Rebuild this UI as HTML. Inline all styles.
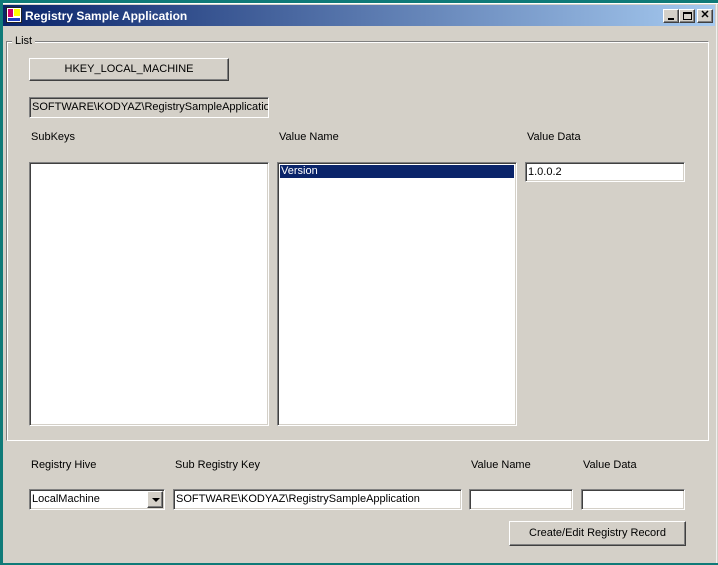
<!DOCTYPE html>
<html><head><style>
*{margin:0;padding:0;box-sizing:border-box}
body{width:718px;height:565px;background:#d4d0c8;position:relative;overflow:hidden;font:11px "Liberation Sans",sans-serif;color:#000}
.a{position:absolute}
.sunk{position:absolute;background:#fff;border:1px solid;border-color:#808080 #fff #fff #808080;box-shadow:inset 1px 1px 0 #404040,inset -1px -1px 0 #d4d0c8}
.btn{position:absolute;background:#d4d0c8;border:1px solid;border-color:#fff #404040 #404040 #fff;box-shadow:inset -1px -1px 0 #808080;text-align:center}
.t{position:absolute;white-space:nowrap}
</style></head><body>
<div class="a" style="left:0;top:0;width:718px;height:3px;background:#0f7a78"></div>
<div class="a" style="left:0;top:0;width:3px;height:565px;background:#0f7a78"></div>
<div class="a" style="left:0;top:563px;width:718px;height:2px;background:#0f7a78"></div>
<div class="a" style="left:716px;top:3px;width:1px;height:560px;background:#f0f0f0"></div>
<div class="a" style="left:3px;top:3px;width:715px;height:1px;background:#fff"></div>
<div class="a" style="left:3px;top:5px;width:712px;height:21px;background:linear-gradient(90deg,#0a246a,#a6caf0)"></div>
<div class="a" style="left:6px;top:7px;width:16px;height:16px;background:#fff;border:1px solid #222">
 <div class="a" style="left:1px;top:1px;width:5px;height:8px;background:#d0006a"></div>
 <div class="a" style="left:7px;top:1px;width:6px;height:7px;background:#ff0"></div>
 <div class="a" style="left:1px;top:10px;width:12px;height:3px;background:#2040c0"></div>
</div>
<div class="t" style="left:25px;top:9px;color:#fff;font-weight:bold;font-size:12px">Registry Sample Application</div>
<div class="btn" style="left:663px;top:9px;width:16px;height:14px"><div class="a" style="left:4px;top:8px;width:6px;height:2px;background:#000"></div></div>
<div class="btn" style="left:679px;top:9px;width:16px;height:14px"><div class="a" style="left:3px;top:2px;width:9px;height:8px;border:1px solid #000;border-top-width:2px"></div></div>
<div class="btn" style="left:697px;top:9px;width:16px;height:14px;font-weight:bold;font-size:11px;line-height:11px">✕</div>
<div class="a" style="left:6px;top:41px;width:703px;height:400px;border:1px solid;border-color:#808080 #fff #fff #808080;box-shadow:inset 1px 1px 0 #fff,1px 1px 0 #808080 inset"></div>
<div class="t" style="left:12px;top:35px;background:#d4d0c8;padding:0 3px">List</div>
<div class="btn" style="left:29px;top:58px;width:200px;height:23px;line-height:20px">HKEY_LOCAL_MACHINE</div>
<div class="sunk" style="left:29px;top:97px;width:240px;height:21px;background:#d4d0c8;overflow:hidden"><div class="t" style="left:2px;top:3px">SOFTWARE\KODYAZ\RegistrySampleApplication</div></div>
<div class="t" style="left:31px;top:131px">SubKeys</div>
<div class="t" style="left:279px;top:131px">Value Name</div>
<div class="t" style="left:527px;top:131px">Value Data</div>
<div class="sunk" style="left:29px;top:162px;width:240px;height:264px"></div>
<div class="sunk" style="left:277px;top:162px;width:240px;height:264px"><div class="a" style="left:2px;top:2px;width:234px;height:13px;background:#0a246a;color:#fff;padding-left:1px;line-height:13px">Version</div></div>
<div class="sunk" style="left:525px;top:162px;width:160px;height:20px"><div class="t" style="left:2px;top:3px">1.0.0.2</div></div>
<div class="t" style="left:31px;top:459px">Registry Hive</div>
<div class="t" style="left:175px;top:459px">Sub Registry Key</div>
<div class="t" style="left:471px;top:459px">Value Name</div>
<div class="t" style="left:583px;top:459px">Value Data</div>
<div class="sunk" style="left:29px;top:489px;width:136px;height:21px"><div class="t" style="left:2px;top:3px">LocalMachine</div>
 <div class="btn" style="left:117px;top:1px;width:16px;height:17px"><div class="a" style="left:4px;top:6px;width:0;height:0;border-left:4px solid transparent;border-right:4px solid transparent;border-top:4px solid #000"></div></div></div>
<div class="sunk" style="left:173px;top:489px;width:289px;height:21px"><div class="t" style="left:2px;top:3px">SOFTWARE\KODYAZ\RegistrySampleApplication</div></div>
<div class="sunk" style="left:469px;top:489px;width:104px;height:21px"></div>
<div class="sunk" style="left:581px;top:489px;width:104px;height:21px"></div>
<div class="btn" style="left:509px;top:521px;width:177px;height:25px;line-height:22px">Create/Edit Registry Record</div>
</body></html>
